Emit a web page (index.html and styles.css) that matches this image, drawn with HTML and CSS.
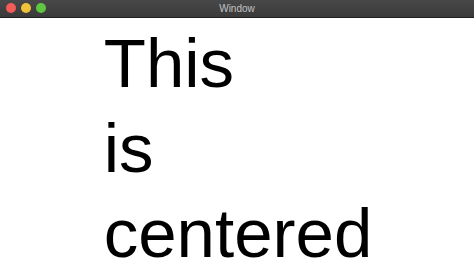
FILE: index.html
```html
<!DOCTYPE html>
<html>
<head>
<meta charset="utf-8">
<link rel="stylesheet" href="styles.css">
</head>
<body>
<div class="window">
  <div class="titlebar">
    <div class="lights">
      <span class="light red"></span>
      <span class="light yellow"></span>
      <span class="light green"></span>
    </div>
    <div class="title">Window</div>
  </div>
  <div class="content">
    <div class="label">This<br>is<br>centered</div>
  </div>
</div>
</body>
</html>
```
FILE: styles.css
```css
html, body {
  margin: 0;
  padding: 0;
  width: 474px;
  height: 279px;
  overflow: hidden;
  background: #ffffff;
}
.window {
  display: flex;
  flex-direction: column;
  width: 474px;
  height: 279px;
}
.titlebar {
  position: relative;
  flex: 0 0 18px;
  height: 18px;
  background: linear-gradient(#484848, #3a3a3a);
  border-bottom: 1px solid #1e1e1e;
  box-sizing: border-box;
  display: flex;
  align-items: center;
  justify-content: center;
}
.lights {
  position: absolute;
  left: 6px;
  top: 3px;
  display: flex;
  gap: 5px;
}
.light {
  width: 10px;
  height: 10px;
  border-radius: 50%;
  display: block;
}
.red { background: #f25b57; }
.yellow { background: #f0c23a; }
.green { background: #5fc73f; }
.title {
  font-family: "Liberation Sans", Arial, sans-serif;
  font-size: 10px;
  color: #c4c4c4;
  line-height: 17px;
}
.content {
  flex: 1;
  display: flex;
  justify-content: center;
  align-items: center;
  overflow: hidden;
}
.label {
  font-family: "Liberation Sans", Arial, sans-serif;
  font-size: 69px;
  line-height: 85px;
  color: #000;
  padding-left: 2px;
  flex: none;
}
```
